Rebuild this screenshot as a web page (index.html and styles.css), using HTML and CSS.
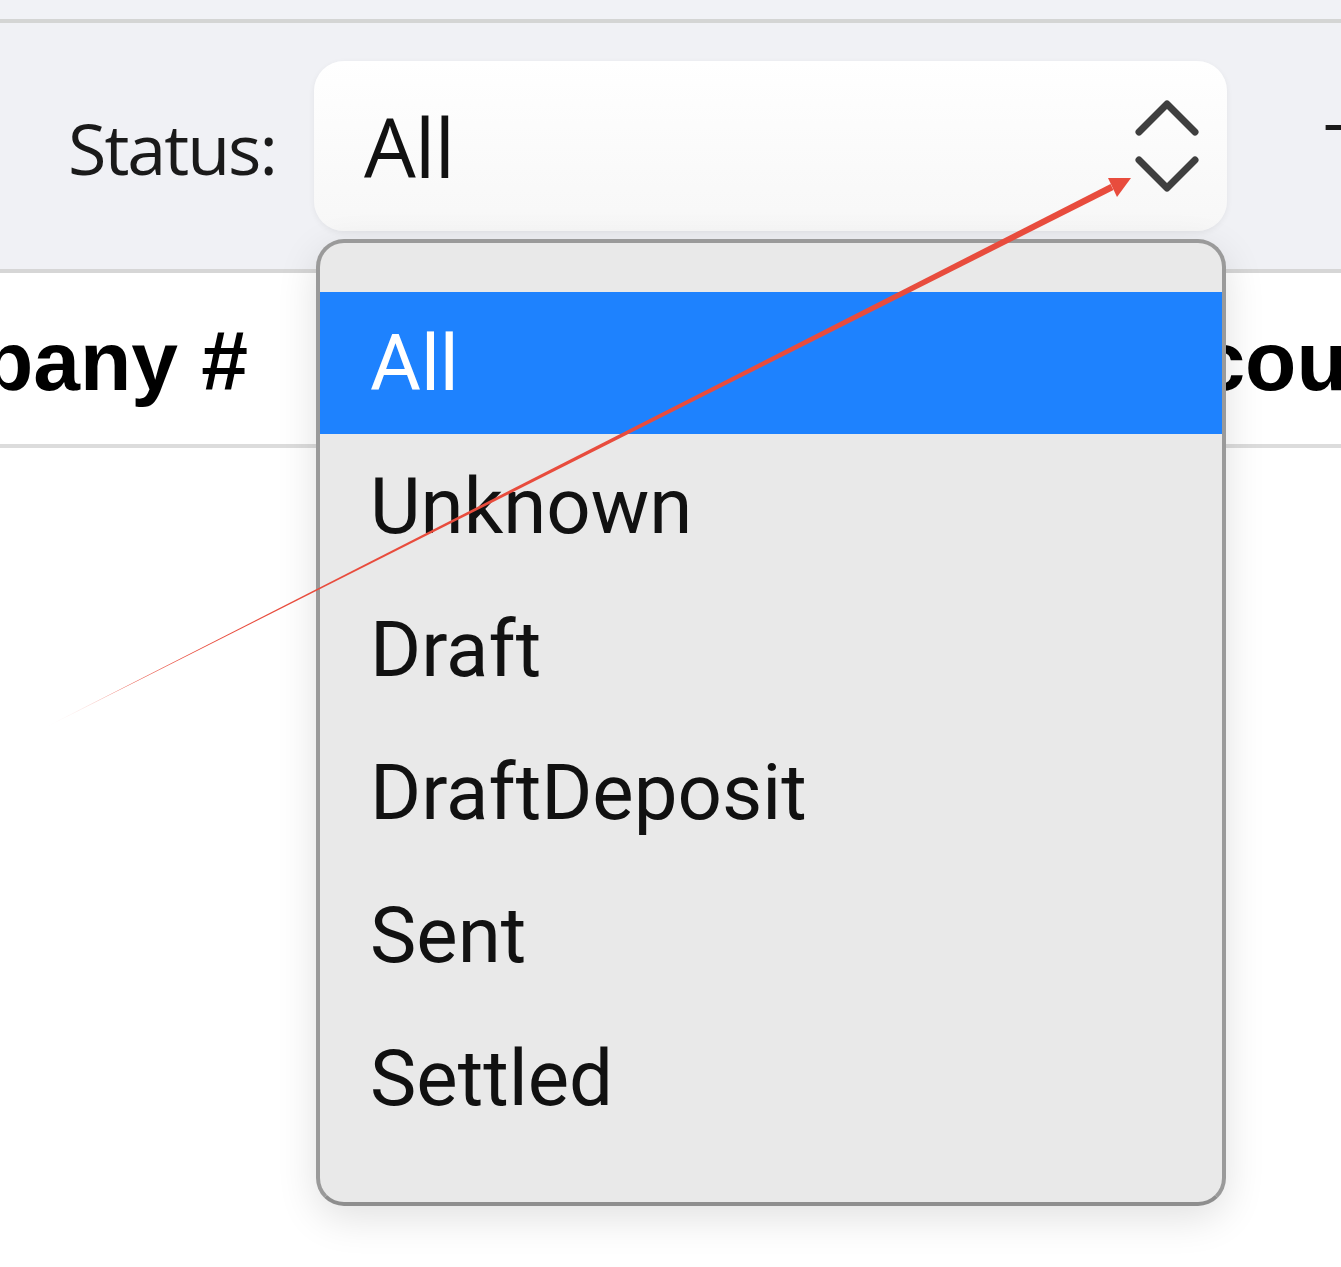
FILE: index.html
```html
<!DOCTYPE html>
<html>
<head>
  <meta charset="utf-8">
  <title>Invoices</title>
  <link rel="stylesheet" href="styles.css">
</head>
<body>
<div class="page">
  <div class="topbar"></div>

  <div class="filters">
    <label class="filters__label" for="status">Status:</label>
    <div class="filters__field">
      <div class="select" id="status">
        <span class="select__value">All</span>
        <svg class="select__chevrons" width="64" height="100" viewBox="0 0 64 100">
          <polyline points="4,36 32,8 60,36" />
          <polyline points="4,64 32,92 60,64" />
        </svg>
      </div>
      <ul class="select__menu">
        <li class="select__option select__option_active">All</li>
        <li class="select__option">Unknown</li>
        <li class="select__option">Draft</li>
        <li class="select__option">DraftDeposit</li>
        <li class="select__option">Sent</li>
        <li class="select__option">Settled</li>
      </ul>
    </div>
    <span class="filters__label filters__label_next">Type:</span>
  </div>

  <div class="thead">
    <div class="thead__cell thead__cell_company"><span>Company #</span></div>
    <div class="thead__cell thead__cell_account"><span>Account</span></div>
  </div>

  <!-- annotation arrow -->
  <svg class="annot" width="1341" height="1267" viewBox="0 0 1341 1267">
    <defs>
      <linearGradient id="fade" x1="48" y1="726" x2="1130" y2="178" gradientUnits="userSpaceOnUse">
        <stop offset="0" stop-color="#e84c3d" stop-opacity="0.1"/>
        <stop offset="0.08" stop-color="#e84c3d" stop-opacity="1"/>
        <stop offset="1" stop-color="#e84c3d" stop-opacity="1"/>
      </linearGradient>
    </defs>
    <polygon points="48,726 1110.5,184 1113.5,190" fill="url(#fade)"/>
    <polygon points="1131,178 1108,178 1117,197" fill="#e84c3d"/>
  </svg>
</div>
</body>
</html>
```

FILE: styles.css
```css
html, body {
    margin: 0;
    padding: 0;
  }
body {
    background: #ffffff;
    font-family: "Open Sans", "Noto Sans", sans-serif;
    color: #111;
  }
.page {
    position: relative;
    width: 1341px;
    height: 1267px;
    overflow: hidden;
  }
.topbar {
    height: 19px;
    background: #f1f2f6;
    border-bottom: 4px solid #d4d5d4;
  }
.filters {
    display: flex;
    align-items: center;
    height: 246px;
    padding-left: 68px;
    background: #f0f1f5;
    border-bottom: 4px solid #d6d6d6;
    white-space: nowrap;
  }
.filters > * {
    flex-shrink: 0;
  }
.filters__label {
    width: 246px;
    padding-top: 4px;
    font-size: 70px;
    letter-spacing: -2px;
    color: #1a1a1a;
  }
.filters__label_next {
    width: auto;
    margin-left: 98px;
  }
.filters__field {
    position: relative;
  }
.select {
    display: flex;
    align-items: center;
    justify-content: space-between;
    box-sizing: border-box;
    width: 913px;
    height: 170px;
    padding: 0 28px 0 50px;
    border-radius: 30px;
    background: linear-gradient(#ffffff, #f7f7f7);
    box-shadow: 0 2px 6px rgba(0, 0, 0, 0.06);
    font-size: 82px;
    letter-spacing: -1px;
    color: #111;
  }
.select__chevrons {
    fill: none;
    stroke: #3f3f3f;
    stroke-width: 7;
    stroke-linecap: round;
    stroke-linejoin: round;
  }
.select__menu {
    position: absolute;
    top: 178px;
    left: 2px;
    z-index: 2;
    box-sizing: border-box;
    width: 910px;
    margin: 0;
    padding: 49px 0 52px;
    list-style: none;
    background: #e9e9e9;
    border: 4px solid #9a9a9a;
    border-bottom-color: #8e8e8e;
    border-radius: 28px;
    box-shadow: 0 12px 40px rgba(0, 0, 0, 0.12);
  }
.select__option {
    height: 143px;
    line-height: 143px;
    padding-left: 50px;
    font-family: Roboto, "Liberation Sans", sans-serif;
    font-size: 78px;
    color: #111;
  }
.select__option_active {
    height: 142px;
    margin-bottom: 1px;
    background: #1e82fe;
    color: #ffffff;
  }
.thead {
    display: flex;
    align-items: center;
    height: 171px;
    background: #fff;
    border-bottom: 4px solid #dcdcdc;
    white-space: nowrap;
    font-family: "Liberation Sans", Arial, sans-serif;
    font-weight: bold;
    font-size: 84px;
    color: #000;
  }
.thead__cell {
    display: flex;
    flex-shrink: 0;
    padding-top: 6px;
  }
.thead__cell span {
    flex-shrink: 0;
  }
.thead__cell_company {
    width: 248px;
    justify-content: flex-end;
    overflow: hidden;
  }
.thead__cell_account {
    margin-left: 843px;
  }
.annot {
    position: absolute;
    top: 0;
    left: 0;
    z-index: 3;
    pointer-events: none;
  }
```
